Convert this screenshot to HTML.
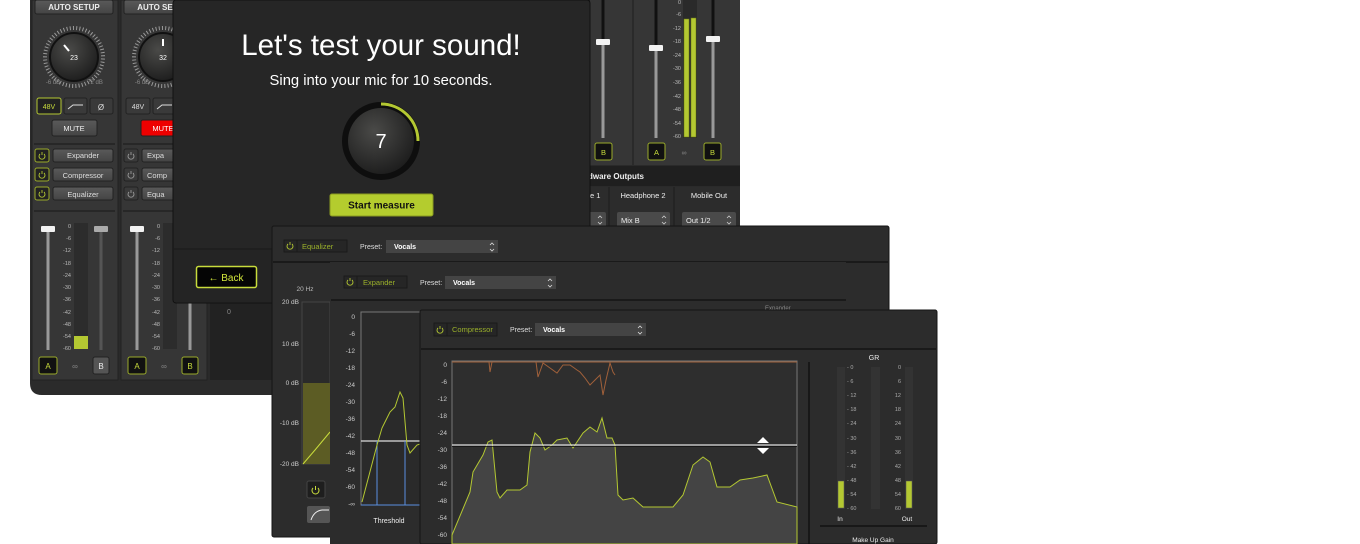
<!DOCTYPE html>
<html><head><meta charset="utf-8"><style>
html,body{margin:0;padding:0;background:#fff;width:1360px;height:544px;overflow:hidden}
svg{display:block;font-family:"Liberation Sans",sans-serif}
</style></head><body>
<svg width="1360" height="544" viewBox="0 0 1360 544" xmlns="http://www.w3.org/2000/svg">
<defs>
<radialGradient id="kn" cx="40%" cy="35%" r="70%"><stop offset="0" stop-color="#4a4a48"/><stop offset="1" stop-color="#1c1c1c"/></radialGradient>
<linearGradient id="btn" x1="0" y1="0" x2="0" y2="1"><stop offset="0" stop-color="#5a5a5a"/><stop offset="1" stop-color="#444"/></linearGradient>
</defs>
<rect width="1360" height="544" fill="#fff"/>
<path d="M30 0H740V380Q740 395 725 395H45Q30 395 30 380Z" fill="#2a2a2a"/>
<path d="M30 380H740V383Q740 395 728 395H42Q30 395 30 383Z" fill="#2b2b2b"/>

<g>
<rect x="32" y="0" width="86" height="380" fill="#363636" stroke="#222"/>
<rect x="35" y="0" width="78" height="14" rx="2" fill="url(#btn)" stroke="#222"/>
<text x="74" y="10" font-size="8" fill="#eee" text-anchor="middle" font-weight="bold">AUTO SETUP</text>
<circle cx="74" cy="57" r="29" fill="none" stroke="#999" stroke-width="4" stroke-dasharray="1 2.2" transform="rotate(135 74 57)"/>
<circle cx="74" cy="57" r="24" fill="url(#kn)" stroke="#111" stroke-width="2"/>
<line x1="64" y1="45" x2="69" y2="51" stroke="#fff" stroke-width="2"/>
<text x="74" y="60" font-size="7" fill="#fff" text-anchor="middle">23</text>
<text x="53" y="84" font-size="6" fill="#888" text-anchor="middle">-6 dB</text>
<text x="95" y="84" font-size="6" fill="#888" text-anchor="middle">72 dB</text>
<rect x="37" y="98" width="24" height="16" rx="2" fill="#222" stroke="#b4c832"/>
<text x="49" y="109" font-size="7" fill="#c8dc3c" text-anchor="middle">48V</text>
<rect x="64" y="98" width="23" height="16" rx="2" fill="#3a3a3a" stroke="#222"/>
<path d="M68 109L73 105H83" fill="none" stroke="#ddd"/>
<rect x="90" y="98" width="23" height="16" rx="2" fill="#3a3a3a" stroke="#222"/>
<text x="101" y="110" font-size="8" fill="#ddd" text-anchor="middle">Ø</text>
<rect x="52" y="120" width="45" height="16" rx="2" fill="url(#btn)" stroke="#222"/>
<text x="74" y="131" font-size="7.5" fill="#eee" text-anchor="middle">MUTE</text>
<line x1="34" y1="144" x2="115" y2="144" stroke="#222" stroke-width="1.5"/>
<g font-size="7.5" fill="#ddd" text-anchor="middle">
<rect x="35" y="149" width="14" height="13" rx="2" fill="#222" stroke="#9aab2a"/>
<rect x="53" y="149" width="60" height="13" rx="2" fill="url(#btn)" stroke="#222"/><text x="83" y="158">Expander</text>
<rect x="35" y="168" width="14" height="13" rx="2" fill="#222" stroke="#9aab2a"/>
<rect x="53" y="168" width="60" height="13" rx="2" fill="url(#btn)" stroke="#222"/><text x="83" y="178">Compressor</text>
<rect x="35" y="187" width="14" height="13" rx="2" fill="#222" stroke="#9aab2a"/>
<rect x="53" y="187" width="60" height="13" rx="2" fill="url(#btn)" stroke="#222"/><text x="83" y="197">Equalizer</text>
</g>
<g fill="none" stroke="#b4c832" stroke-width="0.9"><path d="M40 154a3 3 0 1 0 4 0M42 152v3"/><path d="M40 173a3 3 0 1 0 4 0M42 171v3"/><path d="M40 192a3 3 0 1 0 4 0M42 190v3"/></g>
<line x1="34" y1="211" x2="115" y2="211" stroke="#222" stroke-width="1.5"/>
<rect x="46.5" y="228" width="3" height="122" fill="#999"/>
<rect x="41" y="226" width="14" height="6" rx="1" fill="#f2f2f2"/>
<rect x="74" y="223" width="14" height="126" fill="#2c2c2c"/>
<rect x="74" y="336" width="14" height="13" fill="#b4c832"/>
<g font-size="5.5" fill="#bbb" text-anchor="end">
<text x="71" y="228">0</text><text x="71" y="240">-6</text><text x="71" y="252">-12</text><text x="71" y="265">-18</text><text x="71" y="277">-24</text><text x="71" y="289">-30</text><text x="71" y="301">-36</text><text x="71" y="314">-42</text><text x="71" y="326">-48</text><text x="71" y="338">-54</text><text x="71" y="350">-60</text></g>
<rect x="99.5" y="228" width="3" height="122" fill="#555"/>
<rect x="94" y="226" width="14" height="6" rx="1" fill="#aaa"/>
<rect x="39" y="357" width="18" height="17" rx="2" fill="#111" stroke="#9aab2a"/>
<text x="48" y="369" font-size="8" fill="#c8dc3c" text-anchor="middle">A</text>
<text x="75" y="369" font-size="8" fill="#888" text-anchor="middle">∞</text>
<rect x="93" y="357" width="16" height="17" rx="2" fill="#555" stroke="#222"/>
<text x="101" y="369" font-size="8" fill="#eee" text-anchor="middle">B</text>
</g>

<g transform="translate(89 0)">
<rect x="32" y="0" width="86" height="380" fill="#363636" stroke="#222"/>
<rect x="35" y="0" width="78" height="14" rx="2" fill="url(#btn)" stroke="#222"/>
<text x="74" y="10" font-size="8" fill="#eee" text-anchor="middle" font-weight="bold">AUTO SETUP</text>
<circle cx="74" cy="57" r="29" fill="none" stroke="#999" stroke-width="4" stroke-dasharray="1 2.2" transform="rotate(135 74 57)"/>
<circle cx="74" cy="57" r="24" fill="url(#kn)" stroke="#111" stroke-width="2"/>
<line x1="74" y1="39" x2="74" y2="46" stroke="#fff" stroke-width="2"/>
<text x="74" y="60" font-size="7" fill="#fff" text-anchor="middle">32</text>
<text x="53" y="84" font-size="6" fill="#888" text-anchor="middle">-6 dB</text>
<rect x="37" y="98" width="24" height="16" rx="2" fill="#3a3a3a" stroke="#222"/>
<text x="49" y="109" font-size="7" fill="#ddd" text-anchor="middle">48V</text>
<rect x="64" y="98" width="23" height="16" rx="2" fill="#3a3a3a" stroke="#222"/>
<path d="M68 109L73 105H83" fill="none" stroke="#ddd"/>
<rect x="52" y="120" width="45" height="16" rx="2" fill="#e00" stroke="#222"/>
<text x="74" y="131" font-size="7.5" fill="#fff" text-anchor="middle">MUTE</text>
<line x1="34" y1="144" x2="115" y2="144" stroke="#222" stroke-width="1.5"/>
<rect x="35" y="149" width="14" height="13" rx="2" fill="#3a3a3a" stroke="#222"/>
<rect x="53" y="149" width="60" height="13" rx="2" fill="url(#btn)" stroke="#222"/>
<rect x="35" y="168" width="14" height="13" rx="2" fill="#3a3a3a" stroke="#222"/>
<rect x="53" y="168" width="60" height="13" rx="2" fill="url(#btn)" stroke="#222"/>
<rect x="35" y="187" width="14" height="13" rx="2" fill="#3a3a3a" stroke="#222"/>
<rect x="53" y="187" width="60" height="13" rx="2" fill="url(#btn)" stroke="#222"/>
<g font-size="7.5" fill="#ddd"><text x="58" y="158">Expa</text><text x="58" y="178">Comp</text><text x="58" y="197">Equa</text></g>
<g fill="none" stroke="#999" stroke-width="0.9"><path d="M40 154a3 3 0 1 0 4 0M42 152v3"/><path d="M40 173a3 3 0 1 0 4 0M42 171v3"/><path d="M40 192a3 3 0 1 0 4 0M42 190v3"/></g>
<line x1="34" y1="211" x2="115" y2="211" stroke="#222" stroke-width="1.5"/>
<rect x="46.5" y="228" width="3" height="122" fill="#999"/>
<rect x="41" y="226" width="14" height="6" rx="1" fill="#f2f2f2"/>
<rect x="74" y="223" width="14" height="126" fill="#2c2c2c"/>
<g font-size="5.5" fill="#bbb" text-anchor="end">
<text x="71" y="228">0</text><text x="71" y="240">-6</text><text x="71" y="252">-12</text><text x="71" y="265">-18</text><text x="71" y="277">-24</text><text x="71" y="289">-30</text><text x="71" y="301">-36</text><text x="71" y="314">-42</text><text x="71" y="326">-48</text><text x="71" y="338">-54</text><text x="71" y="350">-60</text></g>
<rect x="99.5" y="228" width="3" height="122" fill="#999"/>
<rect x="39" y="357" width="18" height="17" rx="2" fill="#111" stroke="#9aab2a"/>
<text x="48" y="369" font-size="8" fill="#c8dc3c" text-anchor="middle">A</text>
<text x="75" y="369" font-size="8" fill="#888" text-anchor="middle">∞</text>
<rect x="93" y="357" width="16" height="17" rx="2" fill="#111" stroke="#9aab2a"/>
<text x="101" y="369" font-size="8" fill="#c8dc3c" text-anchor="middle">B</text>
</g>
<rect x="210" y="0" width="380" height="380" fill="#222"/>
<text x="227" y="314" font-size="7" fill="#888">0</text>

<rect x="590" y="0" width="42" height="165" fill="#363636"/>
<rect x="634" y="0" width="106" height="165" fill="#363636"/>
<rect x="601.5" y="5" width="3" height="133" fill="#999"/><rect x="601.5" y="0" width="3" height="40" fill="#111"/>
<rect x="596" y="39" width="14" height="6" rx="1" fill="#f2f2f2"/>
<rect x="654.5" y="5" width="3" height="133" fill="#999"/><rect x="654.5" y="0" width="3" height="46" fill="#111"/>
<rect x="649" y="45" width="14" height="6" rx="1" fill="#f2f2f2"/>
<rect x="711.5" y="5" width="3" height="133" fill="#999"/><rect x="711.5" y="0" width="3" height="37" fill="#111"/>
<rect x="706" y="36" width="14" height="6" rx="1" fill="#f2f2f2"/>
<rect x="683" y="0" width="14" height="138" fill="#2a2a2a"/>
<rect x="684" y="19" width="5" height="118" fill="#b4c832" stroke="#6a7a10" stroke-width="0.5"/>
<rect x="691" y="18" width="5" height="119" fill="#b4c832" stroke="#6a7a10" stroke-width="0.5"/>
<g font-size="5.5" fill="#bbb" text-anchor="end">
<text x="681" y="4">0</text><text x="681" y="16">-6</text><text x="681" y="30">-12</text><text x="681" y="43">-18</text><text x="681" y="57">-24</text><text x="681" y="70">-30</text><text x="681" y="84">-36</text><text x="681" y="98">-42</text><text x="681" y="111">-48</text><text x="681" y="125">-54</text><text x="681" y="138">-60</text></g>
<rect x="595" y="143" width="17" height="17" rx="2" fill="#111" stroke="#9aab2a"/><text x="603.5" y="155" font-size="7.5" fill="#c8dc3c" text-anchor="middle">B</text>
<rect x="648" y="143" width="17" height="17" rx="2" fill="#111" stroke="#9aab2a"/><text x="656.5" y="155" font-size="7.5" fill="#c8dc3c" text-anchor="middle">A</text>
<text x="684" y="155" font-size="7" fill="#888" text-anchor="middle">∞</text>
<rect x="704" y="143" width="17" height="17" rx="2" fill="#111" stroke="#9aab2a"/><text x="712.5" y="155" font-size="7.5" fill="#c8dc3c" text-anchor="middle">B</text>
<rect x="590" y="166" width="150" height="20" fill="#1f1f1f"/>
<text x="588" y="179" font-size="8" fill="#eee" font-weight="bold">dware Outputs</text>
<rect x="590" y="187" width="150" height="45" fill="#2c2c2c"/>
<line x1="609" y1="187" x2="609" y2="232" stroke="#1d1d1d"/><line x1="674" y1="187" x2="674" y2="232" stroke="#1d1d1d"/>
<text x="590" y="198" font-size="7.5" fill="#eee">e 1</text>
<text x="643" y="198" font-size="7.5" fill="#eee" text-anchor="middle">Headphone 2</text>
<text x="709" y="198" font-size="7.5" fill="#eee" text-anchor="middle">Mobile Out</text>
<rect x="580" y="212" width="26" height="16" rx="2" fill="#4a4a4a"/>
<rect x="617" y="212" width="53" height="16" rx="2" fill="#4a4a4a"/><text x="621" y="223" font-size="7.5" fill="#eee">Mix B</text>
<rect x="682" y="212" width="54" height="16" rx="2" fill="#4a4a4a"/><text x="686" y="223" font-size="7.5" fill="#eee">Out 1/2</text>
<g fill="none" stroke="#ccc" stroke-width="0.8"><path d="M598 218l2-2 2 2M598 222l2 2 2-2"/><path d="M662 218l2-2 2 2M662 222l2 2 2-2"/><path d="M727 218l2-2 2 2M727 222l2 2 2-2"/></g>

<rect x="173" y="0" width="417" height="303" rx="3" fill="#262626" stroke="#111"/>
<rect x="174" y="250" width="415" height="52" fill="#242424"/>
<line x1="174" y1="249" x2="589" y2="249" stroke="#181818"/>
<text x="381" y="55" font-size="29.5" fill="#fff" text-anchor="middle">Let's test your sound!</text>
<text x="381" y="85" font-size="14.8" fill="#fff" text-anchor="middle">Sing into your mic for 10 seconds.</text>
<circle cx="381" cy="141" r="39" fill="#0e0e0e"/>
<path d="M381 104A37 37 0 0 1 418 141" fill="none" stroke="#b4c832" stroke-width="3"/>
<circle cx="381" cy="141" r="33" fill="url(#kn)"/>
<text x="381" y="148" font-size="20" fill="#fff" text-anchor="middle">7</text>
<rect x="330" y="194" width="103" height="22" rx="2" fill="#b4cc2e" stroke="#8a9a20"/>
<text x="381.5" y="208.5" font-size="10" fill="#111" text-anchor="middle" font-weight="bold">Start measure</text>
<rect x="196.5" y="266.5" width="60" height="21" rx="2" fill="#050505" stroke="#c8dc3c" stroke-width="1.5"/>
<text x="226" y="281" font-size="10" fill="#d4e83c" text-anchor="middle">← Back</text>

<rect x="272" y="226" width="617" height="311" rx="2" fill="#2c2c2c" stroke="#151515"/>
<rect x="284" y="240" width="13" height="12" fill="#262626" stroke="#1a1a1a"/>
<path d="M288 244a3 3 0 1 0 4 0M290 242v3" fill="none" stroke="#b4c832" stroke-width="0.9"/>
<rect x="297" y="240" width="50" height="12" fill="#262626" stroke="#1a1a1a"/>
<text x="302" y="249" font-size="7.5" fill="#9ab02a">Equalizer</text>
<text x="360" y="249" font-size="7" fill="#ddd">Preset:</text>
<rect x="386" y="240" width="112" height="13" fill="#444"/>
<text x="394" y="249" font-size="7" fill="#fff" font-weight="bold">Vocals</text>
<path d="M490 245l2-2 2 2M490 249l2 2 2-2" fill="none" stroke="#ddd" stroke-width="0.8"/>
<line x1="273" y1="262" x2="888" y2="262" stroke="#151515" stroke-width="1.5"/>
<text x="305" y="291" font-size="6.5" fill="#bbb" text-anchor="middle">20 Hz</text>
<g font-size="6.5" fill="#ccc" text-anchor="end"><text x="299" y="304">20 dB</text><text x="299" y="346">10 dB</text><text x="299" y="385">0 dB</text><text x="299" y="425">-10 dB</text><text x="299" y="466">-20 dB</text></g>
<rect x="302" y="302" width="28" height="162" fill="#2a2a2a" stroke="#444"/>
<rect x="303" y="383" width="27" height="81" fill="#5c5c24"/>
<path d="M303 464L315 450L330 432" fill="none" stroke="#c8dc3c"/>
<rect x="307" y="481" width="18" height="17" rx="2" fill="#1e1e1e" stroke="#444"/>
<path d="M313 488a3.5 3.5 0 1 0 5 0M315.5 486v4" fill="none" stroke="#c8dc3c"/>
<rect x="307" y="506" width="23" height="17" rx="2" fill="#555"/>
<path d="M311 520Q314 511 322 510H329" fill="none" stroke="#eee"/>

<rect x="330" y="262" width="516" height="282" fill="#2c2c2c"/>
<rect x="344" y="276" width="13" height="12" fill="#262626" stroke="#1a1a1a"/>
<path d="M348 280a3 3 0 1 0 4 0M350 278v3" fill="none" stroke="#b4c832" stroke-width="0.9"/>
<rect x="357" y="276" width="50" height="12" fill="#262626" stroke="#1a1a1a"/>
<text x="363" y="285" font-size="7.5" fill="#9ab02a">Expander</text>
<text x="420" y="285" font-size="7" fill="#ddd">Preset:</text>
<rect x="445" y="276" width="111" height="13" fill="#444"/>
<text x="453" y="285" font-size="7" fill="#fff" font-weight="bold">Vocals</text>
<path d="M548 281l2-2 2 2M548 285l2 2 2-2" fill="none" stroke="#ddd" stroke-width="0.8"/>
<line x1="331" y1="300" x2="846" y2="300" stroke="#151515" stroke-width="1.5"/>
<text x="765" y="310" font-size="6" fill="#888">Expander</text>
<g font-size="6.5" fill="#ccc" text-anchor="end"><text x="355" y="319">0</text><text x="355" y="336">-6</text><text x="355" y="353">-12</text><text x="355" y="370">-18</text><text x="355" y="387">-24</text><text x="355" y="404">-30</text><text x="355" y="421">-36</text><text x="355" y="438">-42</text><text x="355" y="455">-48</text><text x="355" y="472">-54</text><text x="355" y="489">-60</text><text x="355" y="506">-∞</text></g>
<rect x="361" y="312" width="62" height="193" fill="#2a2a2a" stroke="#777"/>
<line x1="361" y1="441" x2="423" y2="441" stroke="#ddd" stroke-width="1.2"/>
<line x1="377" y1="441" x2="377" y2="505" stroke="#5a8fe0"/><line x1="405" y1="441" x2="405" y2="505" stroke="#5a8fe0"/>
<line x1="361" y1="505" x2="423" y2="505" stroke="#5a8fe0"/>
<path d="M362 502L377 445L382 428L385 422L390 412L395 407L400 392L403 398L407 445L410 453L417 445L423 443" fill="none" stroke="#b4c832"/>
<text x="389" y="523" font-size="7" fill="#eee" text-anchor="middle">Threshold</text>

<rect x="420" y="310" width="517" height="234" rx="2" fill="#2c2c2c" stroke="#151515"/>
<rect x="434" y="323" width="13" height="13" fill="#262626" stroke="#1a1a1a"/>
<path d="M438 328a3 3 0 1 0 4 0M440 326v3" fill="none" stroke="#b4c832" stroke-width="0.9"/>
<rect x="447" y="323" width="50" height="13" fill="#262626" stroke="#1a1a1a"/>
<text x="452" y="332" font-size="7.5" fill="#9ab02a">Compressor</text>
<text x="510" y="332" font-size="7" fill="#ddd">Preset:</text>
<rect x="535" y="323" width="111" height="13" fill="#444"/>
<text x="543" y="332" font-size="7" fill="#fff" font-weight="bold">Vocals</text>
<path d="M638 328l2-2 2 2M638 332l2 2 2-2" fill="none" stroke="#ddd" stroke-width="0.8"/>
<line x1="421" y1="349" x2="936" y2="349" stroke="#151515" stroke-width="1.5"/>
<g font-size="6.5" fill="#ccc" text-anchor="end"><text x="447" y="367">0</text><text x="447" y="384">-6</text><text x="447" y="401">-12</text><text x="447" y="418">-18</text><text x="447" y="435">-24</text><text x="447" y="452">-30</text><text x="447" y="469">-36</text><text x="447" y="486">-42</text><text x="447" y="503">-48</text><text x="447" y="520">-54</text><text x="447" y="537">-60</text></g>
<rect x="452" y="361" width="345" height="190" fill="#2e2e2e" stroke="#777"/>
<line x1="452" y1="362" x2="797" y2="362" stroke="#a0603a"/>
<path d="M452 544L452 535L470 492L473 472L483 455L488 442L492 440L497 492L500 498L507 490L520 490L527 485L530 452L535 433L540 438L545 450L552 445L557 440L567 438L573 448L583 433L590 427L597 432L602 418L607 438L612 438L615 445L618 495L623 500L633 498L643 507L673 507L683 495L693 465L703 457L710 462L717 487L730 487L740 480L753 478L767 475L777 502L797 507L797 544Z" fill="#444" stroke="#b4c832"/>
<path d="M489 362L490 372L492 362M536 362L538 377L543 363L550 368L557 373L563 365L570 365L577 370L580 372L585 378L590 385L595 380L600 375L603 395L606 380L610 363L613 372L615 375" fill="none" stroke="#a0603a"/>
<line x1="452" y1="445" x2="797" y2="445" stroke="#ddd" stroke-width="1.2"/>
<line x1="452" y1="446.5" x2="797" y2="446.5" stroke="#111" stroke-width="0.8"/>
<path d="M757 443L763 437L769 443ZM757 448L763 454L769 448Z" fill="#fff"/>
<line x1="809" y1="362" x2="809" y2="544" stroke="#111" stroke-width="1.5"/>
<text x="874" y="360" font-size="7" fill="#eee" text-anchor="middle">GR</text>
<rect x="837" y="367" width="8" height="142" fill="#333"/>
<rect x="838" y="481" width="6" height="27" fill="#b4c832" stroke="#555" stroke-width="0.5"/>
<rect x="871" y="367" width="9" height="142" fill="#333"/>
<rect x="905" y="367" width="8" height="142" fill="#333"/>
<rect x="906" y="481" width="6" height="27" fill="#b4c832" stroke="#555" stroke-width="0.5"/>
<g font-size="5.5" fill="#aaa"><text x="847" y="369">- 0</text><text x="847" y="383">- 6</text><text x="847" y="397">- 12</text><text x="847" y="411">- 18</text><text x="847" y="425">- 24</text><text x="847" y="440">- 30</text><text x="847" y="454">- 36</text><text x="847" y="468">- 42</text><text x="847" y="482">- 48</text><text x="847" y="496">- 54</text><text x="847" y="510">- 60</text></g>
<g font-size="5.5" fill="#aaa" text-anchor="end"><text x="901" y="369">0</text><text x="901" y="383">6</text><text x="901" y="397">12</text><text x="901" y="411">18</text><text x="901" y="425">24</text><text x="901" y="440">30</text><text x="901" y="454">36</text><text x="901" y="468">42</text><text x="901" y="482">48</text><text x="901" y="496">54</text><text x="901" y="510">60</text></g>
<text x="840" y="521" font-size="6.5" fill="#eee" text-anchor="middle">In</text>
<text x="907" y="521" font-size="6.5" fill="#eee" text-anchor="middle">Out</text>
<line x1="820" y1="526" x2="927" y2="526" stroke="#111" stroke-width="1.5"/>
<text x="873" y="542" font-size="6.5" fill="#eee" text-anchor="middle">Make Up Gain</text>
</svg>
</body></html>
